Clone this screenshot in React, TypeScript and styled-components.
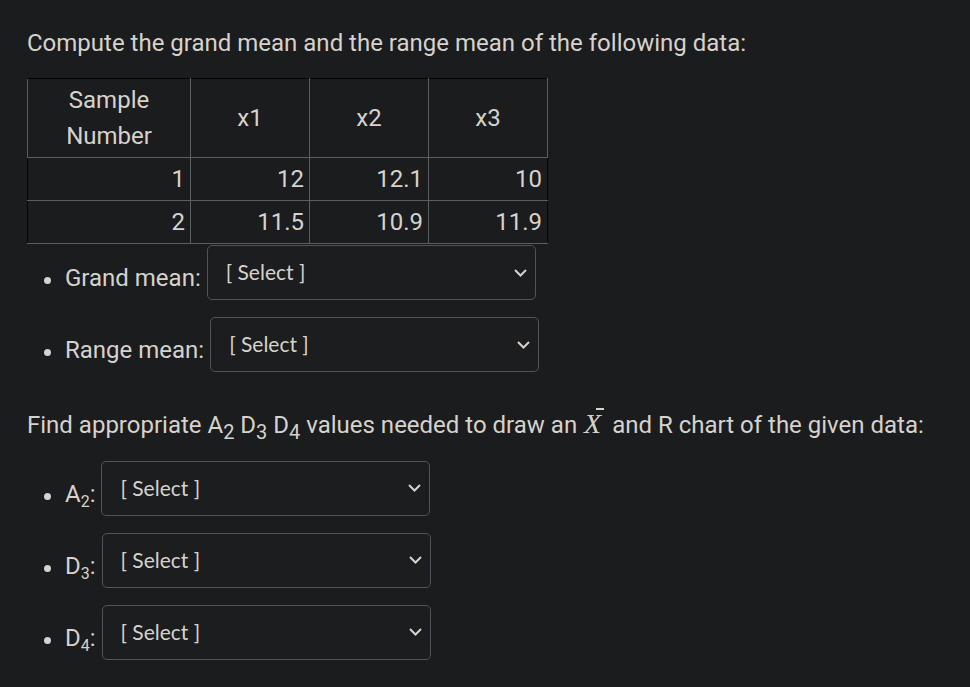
import React from 'react';
import styled, { createGlobalStyle } from 'styled-components';

const GlobalStyle = createGlobalStyle`
  body {
    margin: 0;
    background: #1b1c1e;
  }
`

const rows = [
  { n: '1', x1: '12', x2: '12.1', x3: '10' },
  { n: '2', x1: '11.5', x2: '10.9', x3: '11.9' },
]

const Page = styled.div`
  min-height: 100vh;
  padding: 27px 0 0 27px;
  box-sizing: border-box;
  background: #1b1c1e;
  color: #d6d2cc;
  font-family: Roboto, "Liberation Sans", sans-serif;
  font-size: 24px;
`

const Prompt = styled.p<{ $top?: number }>`
  margin: ${p => p.$top || 0}px 0 0;
  line-height: 32px;
`

const DataTable = styled.table`
  margin-top: 19px;
  border-collapse: collapse;
  border: 1px solid #050505;
  line-height: 36px;
`

const Th = styled.th<{ $w: number }>`
  width: ${p => p.$w}px;
  box-sizing: border-box;
  padding: 3px 5px;
  font-weight: 400;
  text-align: center;
  vertical-align: middle;
  border: 1px solid #5c5f62;
  border-top-color: #050505;
`

const Td = styled.td`
  padding: 3px 5px;
  text-align: right;
  border: 1px solid #5c5f62;
  &:first-child { border-left-color: #050505; }
  &:last-child { border-right-color: #050505; }
`

const AnswerList = styled.ul<{ $top: number }>`
  list-style: none;
  margin: ${p => p.$top}px 0 0;
  padding: 0;
  display: flex;
  flex-direction: column;
  gap: 17px;
`

const AnswerItem = styled.li`
  display: flex;
  align-items: flex-start;
  &::before {
    content: '';
    width: 7px;
    height: 7px;
    border-radius: 50%;
    background: #d6d2cc;
    margin: 32px 14px 0 17px;
    flex-shrink: 0;
  }
`

const Label = styled.span`
  margin-top: 17px;
  margin-right: 6px;
  line-height: 32px;
  white-space: nowrap;
  sub {
    font-size: 16px;
    vertical-align: -5px;
    line-height: 0;
  }
`

const SelectWrap = styled.div`
  position: relative;
  width: 329px;
  height: 55px;
`

const Select = styled.select`
  appearance: none;
  width: 100%;
  height: 100%;
  box-sizing: border-box;
  padding: 0 40px 2px 18px;
  background: #1c1d1f;
  color: #d6d2cc;
  border: 1px solid #505357;
  border-radius: 5px;
  font-family: Lato, "Noto Sans", sans-serif;
  font-size: 21px;
  outline: none;
`

const Chevron = styled.svg`
  position: absolute;
  right: 9px;
  top: 50%;
  margin-top: -4px;
  pointer-events: none;
`

const XBar = styled.span`
  position: relative;
  display: inline-block;
  font-family: "Liberation Serif", "DejaVu Serif", serif;
  font-style: italic;
  font-size: 28px;
  line-height: 0;
  margin: 0 5px 0 1px;
  &::after {
    content: '';
    position: absolute;
    left: 12px;
    width: 8px;
    top: -16px;
    height: 2px;
    background: #d6d2cc;
  }
`

const Dropdown: React.FC = () => (
  <SelectWrap>
    <Select defaultValue="">
      <option value="">[ Select ]</option>
    </Select>
    <Chevron width="13" height="8" viewBox="0 0 13 8">
      <path d="M1 1l5.5 5.5L12 1" fill="none" stroke="#d6d2cc" strokeWidth="2" />
    </Chevron>
  </SelectWrap>
)

const App: React.FC = () => {
  return (
    <Page>
      <GlobalStyle />
      <Prompt>Compute the grand mean and the range mean of the following data:</Prompt>
      <DataTable>
        <thead>
          <tr>
            <Th $w={163}>Sample<br />Number</Th>
            <Th $w={119}>x1</Th>
            <Th $w={119}>x2</Th>
            <Th $w={119}>x3</Th>
          </tr>
        </thead>
        <tbody>
          {rows.map(r => (
            <tr key={r.n}>
              <Td>{r.n}</Td>
              <Td>{r.x1}</Td>
              <Td>{r.x2}</Td>
              <Td>{r.x3}</Td>
            </tr>
          ))}
        </tbody>
      </DataTable>
      <AnswerList $top={1}>
        <AnswerItem>
          <Label>Grand mean:</Label>
          <Dropdown />
        </AnswerItem>
        <AnswerItem>
          <Label>Range mean:</Label>
          <Dropdown />
        </AnswerItem>
      </AnswerList>
      <Prompt $top={37}>
        Find appropriate A<sub>2</sub> D<sub>3</sub> D<sub>4</sub> values needed to draw an <XBar>X</XBar> and R chart of the given data:
      </Prompt>
      <AnswerList $top={13}>
        <AnswerItem>
          <Label>A<sub>2</sub>:</Label>
          <Dropdown />
        </AnswerItem>
        <AnswerItem>
          <Label>D<sub>3</sub>:</Label>
          <Dropdown />
        </AnswerItem>
        <AnswerItem>
          <Label>D<sub>4</sub>:</Label>
          <Dropdown />
        </AnswerItem>
      </AnswerList>
    </Page>
  )
}

export default App
